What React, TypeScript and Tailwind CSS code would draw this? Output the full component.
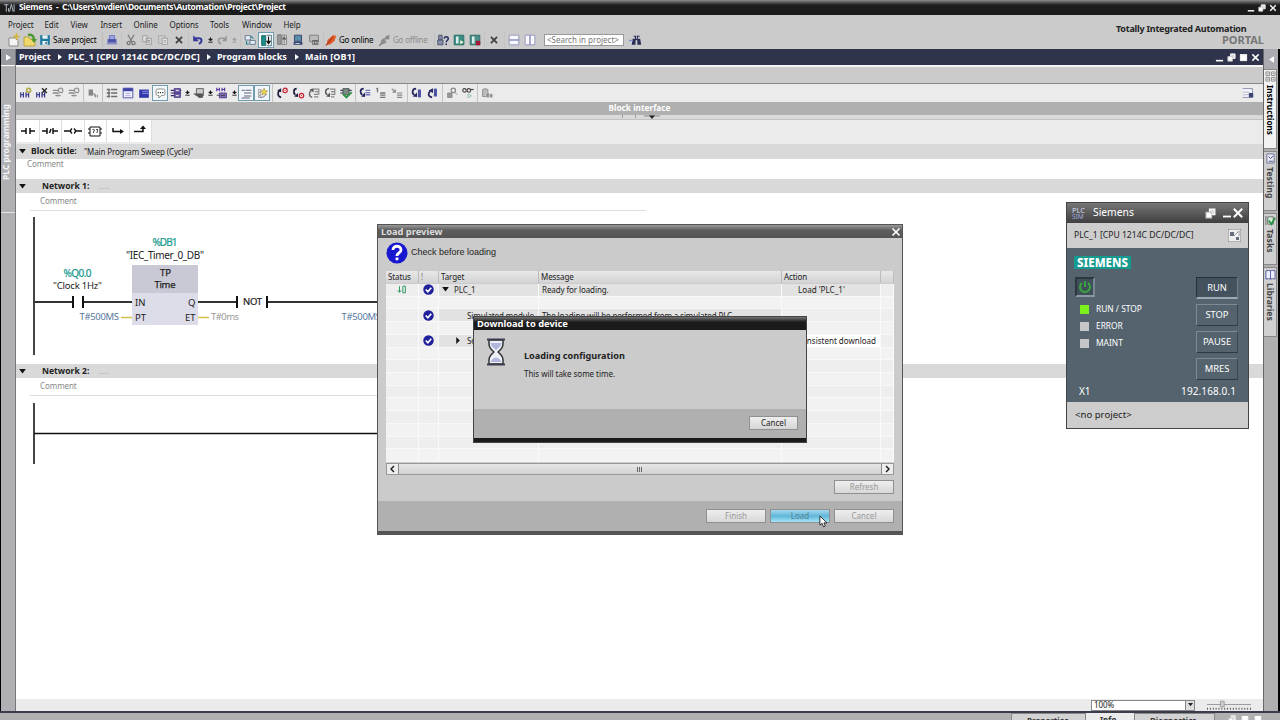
import React from 'react'
import type { ReactNode } from 'react'
import clsx from 'clsx'

const NAVY = '#2b2b86'
const GRAY = '#8b8b8b'

// small toolbar drawings, all on a 16x16 grid
const glyphs: Record<string, ReactNode> = {
  new: <><path d="M3 6h7l2 2v6H3z" fill="#f4f4f4" stroke="#777" strokeWidth=".8" /><path d="M10.500 1v7M7 4.500h7" stroke="#d8b53a" strokeWidth="1.600" /></>,
  open: <><path d="M2 5h5l1 2h5v7H2z" fill="#f0d96a" stroke="#b39a35" strokeWidth=".8" /><path d="M6 3c4-1 6 1 6 5" fill="none" stroke="#4b9a2e" strokeWidth="2.400" /><path d="M9 7h6l-3 4z" fill="#4b9a2e" /></>,
  save: <><path d="M2.500 2.500h11v11h-11z" fill="#1d7b9f" /><path d="M5 2.500h6v4H5zM5 9h6v4.500H5z" fill="#e8f2f5" /><path d="M8.500 10h1.500v2.500H8.500z" fill="#1d5a78" /></>,
  print: <><path d="M5 3h6v5H5z" fill="#9aa2e0" stroke="#6c72c0" /><path d="M3 7h10v4H3z" fill="#4d50a8" /><path d="M2 11h12v2H2z" fill="#8388c6" /></>,
  cut: <path d="M4.500 2l5 8.500M11.500 2l-5 8.500M3.500 12a1.500 1.500 0 103.500-1 1.500 1.500 0 10-3.500 1M9 11a1.500 1.500 0 103.500 1 1.500 1.500 0 10-3.500-1" fill="none" stroke="#777" strokeWidth="1.400" />,
  copy: <><path d="M3 3h5v7H3zM7 6h6v7H7z" fill="#ddd" stroke="#999" /><path d="M8.500 8.500h3M8.500 10.500h3" stroke="#888" /></>,
  paste: <><path d="M3 3h7v9H3z" fill="#ccc" stroke="#aaa" /><path d="M7 6h6v7H7z" fill="#e8e8e8" stroke="#999" /><path d="M8.500 8.500h3M8.500 10.500h3" stroke="#999" /></>,
  del: <path d="M4.500 4.500l7 7M11.500 4.500l-7 7" stroke="#3c3c3c" strokeWidth="1.900" />,
  undo: <><path d="M5 6h4c4 0 4 5 0 6.500" fill="none" stroke="#33379b" strokeWidth="2.200" /><path d="M2.500 2.500v7H9z" fill="#33379b" /></>,
  redo: <><path d="M11 6H7c-4 0-4 5 0 6.500" fill="none" stroke="#999" strokeWidth="1.800" /><path d="M13.500 2.500v7H8z" fill="#999" /></>,
  drop: <><path d="M8 2v6M4 6h8l-4 4zM3 13h10" stroke="#111" strokeWidth="2" fill="#111" /></>,
  dropgray: <><path d="M8 2v6M4 6h8l-4 4zM3 13h10" stroke="#999" strokeWidth="1.800" fill="#999" /></>,
  compile: <><path d="M2.500 3h6v5h-6zM8 8.500h6V13H8z" fill="#e6eef5" stroke="#60738c" /><path d="M9 3.500l3 3M4 9v3.500h3" stroke="#1f8792" fill="none" strokeWidth="1.200" /></>,
  download: <><path d="M2 2h5v12H2z" fill="#1b8f89" stroke="#145d5a" /><path d="M10.500 3v6M8.500 9h4l-2 3z" stroke="#111" fill="#111" strokeWidth="1.400" /><path d="M8 1.500h6v13H8" fill="none" stroke="#3b626b" /></>,
  upload: <><path d="M3 2h4v11H3z" fill="#999" stroke="#777" /><path d="M8 2.500h5v10.500H8z" fill="#e3e3e3" stroke="#777" /><path d="M10.500 12V6M8.500 7l2-3 2 3z" stroke="#666" fill="#666" /></>,
  sim: <><path d="M4 2.500h8v7H4z" fill="#5a8fa8" stroke="#333c66" /><path d="M3 10h10v3.500H3z" fill="#3d4773" /><path d="M5 12h5" stroke="#cdd" /></>,
  runtime: <><path d="M3 2.500h10v7.500H3z" fill="#bbb" stroke="#777" /><path d="M6 8h7v5.500H6z" fill="#666" /><path d="M7.500 10v2M9.500 10v2M11.500 10v2" stroke="#ddd" /></>,
  online: <><path d="M4 8l6-5.500 4 .5-2 6-5 4-4 .5z" fill="#df5b2c" /><path d="M2 14.500L10 5" stroke="#a93b16" strokeWidth="1.200" /></>,
  offline: <><path d="M3 9l3-3 4 4-3 2.500H4zM8 4l5-2v5l-3 .500z" fill="#8d8d8d" /><path d="M1.500 14.500l3-3M7 7l3-1" stroke="#777" strokeWidth="1.500" /></>,
  help: <><path d="M3 2.500h4v5H3zM2 8h6v5.500H2z" fill="#8790a8" stroke="#3f4665" strokeWidth=".9" /><path d="M9.500 6.500c0-3 4.500-3 4.500 0 0 2-2.300 1.600-2.300 4M11.700 12v1.700" fill="none" stroke="#252a63" strokeWidth="1.700" /></>,
  start: <><path d="M2.500 2.500h11v11h-11z" fill="#3a8d85" stroke="#286a64" /><path d="M4.500 4h3v8h-3z" fill="#d9eeea" /><path d="M9 7.500l5 3-5 3z" fill="#fff" stroke="#2c7f46" strokeWidth=".8" /></>,
  stop: <><path d="M2.500 2.500h11v11h-11z" fill="#4a9088" stroke="#286a64" /><path d="M4.500 4h3v8h-3z" fill="#d9eeea" /><path d="M9 9h5v5H9z" fill="#a51736" /></>,
  splith: <><path d="M2.500 2.500h11v11h-11z" fill="#fafaff" stroke="#8d91bd" /><path d="M2.500 8h11" stroke="#7a7fb8" strokeWidth="1.500" /></>,
  splitv: <><path d="M2.500 2.500h11v11h-11z" fill="#fafaff" stroke="#8d91bd" /><path d="M8 2.500v11" stroke="#7a7fb8" strokeWidth="1.500" /></>,
  find: <><path d="M5 6h3v6.500H4zM10 6h3l1 6.500h-4z" fill="#292d58" /><path d="M6 3.500h2V7h2V3.500h2.500" stroke="#292d58" fill="none" strokeWidth="1.200" /><path d="M1 8h4" stroke="#8390d8" strokeWidth="1.500" /></>,
  netadd: <><path d="M2 7v6M2 10h3M5 7v6M8 7v6M8 10h3M11 7v6" stroke={NAVY} strokeWidth="1.300" /><circle cx="11" cy="5" r="3.200" fill="#b3ad4b" /><circle cx="11" cy="5" r="1.200" fill="#eef" /></>,
  netdel: <><path d="M2 7v6M2 10h3M5 7v6M8 7v6M8 10h3M11 7v6" stroke={NAVY} strokeWidth="1.300" /><path d="M8 2.500l5.500 5.500M13.500 2.500L8 8" stroke="#222" strokeWidth="1.500" /></>,
  rowadd: <><path d="M2 5h6M2 8h6M5 11h6" stroke={GRAY} strokeWidth="1.600" /><circle cx="11" cy="5" r="2.500" fill="none" stroke="#999" strokeWidth="1.500" /><path d="M8 8v4" stroke="#999" /></>,
  lock: <><path d="M3 4h5v7H3z" fill="#858585" /><path d="M8 9h2v3M11 10v3M13 10v3" stroke="#777" fill="none" /></>,
  rows: <path d="M2 4h4M7 4h7M2 8h4M7 8h7M2 12h4M7 12h7M4.500 3v10" stroke="#6c6c6c" strokeWidth="1.500" />,
  panel: <><path d="M2.500 2.500h11v11h-11z" fill="#f5f5ff" stroke="#3e43a5" /><path d="M2.500 2.500h11v3.500h-11z" fill="#3e43a5" /><path d="M5 8.500h6M5 11h6" stroke="#9da0cf" /></>,
  panelfill: <><path d="M2.500 4h11v9.500h-11z" fill="#3238ab" /><path d="M6 6h7M6 8.500h7" stroke="#98a0ed" /></>,
  note: <><path d="M2.500 4.500q0-2 2-2h7q2 0 2 2v4q0 2-2 2H9l-3 3v-3H4.500q-2 0-2-2z" fill="#fff" stroke="#777" /><path d="M4.500 7h1.500M7.200 7h1.500M10 7h1.500" stroke="#333" strokeWidth="1.600" /></>,
  symbol: <><path d="M6 3h7v10H6z" fill="#7666ac" stroke="#48347e" /><path d="M2 5h4M2 8h11M2 11h4M13 5h1" stroke="#3b2671" strokeWidth="1.300" /><path d="M8 5h3M8 11h3" stroke="#fff" /></>,
  blockgray: <><path d="M5 3h8v8H5z" fill="#ccc" stroke="#555" /><path d="M2 9h6v4M8 9h4v4H8z" fill="#555" stroke="#555" /></>,
  contact: <><path d="M2 2v4M2 4h3M5 2v4M8 2v4M8 4h3M11 2v4" stroke="#56369c" strokeWidth="1.300" /><path d="M5 8h8v5.500H5z" fill="#8671b9" stroke="#4c3682" /><path d="M2 10.500h3M6.500 11h5" stroke="#333" /></>,
  listbox: <path d="M2 4h4M7 4h7M5 7.500h9M5 11h9M2 13.500h10" stroke="#5d637c" strokeWidth="1.300" />,
  star: <><path d="M3 3h3v3H3zM3 7h3v3H3zM3 11h3v2H3z" fill="#fff" stroke="#777" strokeWidth=".8" /><path d="M10 1.500l1.300 3 3 .3-2.300 2 .7 3.200L10 8.300 7.500 10l.6-3.200-2-2 2.700-.3z" fill="#f0da4b" stroke="#967f25" strokeWidth=".7" /><path d="M6 13l4-1 2-3" stroke="#55668a" fill="none" /></>,
  upred: <><path d="M7 13C3 12.500 2.500 8 5 5" fill="none" stroke="#202040" strokeWidth="2" /><path d="M2.500 5L7 2.500v4.500z" fill="#202040" /><circle cx="11.500" cy="5" r="2.500" fill="#fff" stroke="#c32032" strokeWidth="1.300" /><path d="M10.500 4l2 2M12.500 4l-2 2" stroke="#c32032" strokeWidth=".8" /></>,
  downred: <><path d="M6.500 3C2.500 3 2.500 8 5 10" fill="none" stroke="#202040" strokeWidth="2" /><path d="M3.500 12l4.500.5V8z" fill="#202040" /><circle cx="12" cy="11" r="2.500" fill="#fff" stroke="#c32032" strokeWidth="1.300" /><path d="M11 10l2 2M13 10l-2 2" stroke="#c32032" strokeWidth=".8" /></>,
  uplist: <><path d="M6 13C2 12 2 7 5 5" fill="none" stroke="#666" strokeWidth="1.700" /><path d="M3 4L7.500 2.500v5z" fill="#555" /><path d="M8 3.500h6M9 6.500h5M8 9.500h5M8 12.500h5M13.500 3v7" stroke="#888" strokeWidth="1.300" /></>,
  downlist: <><path d="M7 3C2 3 2 8 5 10" fill="none" stroke="#555" strokeWidth="1.700" /><path d="M3.500 12L8 12.500V7.500z" fill="#555" /><path d="M8 3.500h6M9 6.500h5M9 9.500h5M9 12.500h4M13.500 3v7" stroke="#888" strokeWidth="1.300" /></>,
  check: <><path d="M4.500 3h7v7h-7z" fill="#7c8a84" stroke="#405048" /><path d="M1.500 5h3M1.500 8h3M11 5h3.500" stroke="#445" strokeWidth="1.300" /><path d="M5 9.500L8.500 13l6-6" fill="none" stroke="#329146" strokeWidth="2.400" /></>,
  jump: <><path d="M6.500 3C2 3 2 8 5 10" fill="none" stroke="#25275f" strokeWidth="2" /><path d="M3.500 12l4.500.5v-5z" fill="#25275f" /><path d="M8.500 5H14M8.500 7.500H14M8.500 10H14" stroke="#7276b8" strokeWidth="1.500" /></>,
  indent: <path d="M4 2v5M2.500 3H4M7 8h6M7 10.500h6M7 13h6" stroke="#777" strokeWidth="1.500" />,
  outdent: <path d="M2 3l4 4M6 4v3H3M8 8h6M8 10.500h6M8 13h6" stroke="#888" strokeWidth="1.400" fill="none" />,
  next: <><path d="M7 3C2 3 2 9 5 10" fill="none" stroke="#25275f" strokeWidth="2" /><path d="M3 12l5 .5v-5z" fill="#25275f" /><path d="M9 4h3.500v9H9z" fill="#4a50a4" /></>,
  prev: <><path d="M7 13C2 12 2 8 5 6" fill="none" stroke="#25275f" strokeWidth="2" /><path d="M3 5l5-2.500V8z" fill="#25275f" /><path d="M9 3h3.500v9H9z" fill="#4a50a4" /></>,
  person: <><circle cx="9.500" cy="5" r="2.500" fill="none" stroke="#888" strokeWidth="1.400" /><path d="M3 8h5v5H3zM11 7l3 3" fill="#999" stroke="#888" /></>,
  glasses: <><circle cx="4" cy="5" r="2" fill="none" stroke="#444" strokeWidth="1.300" /><circle cx="9" cy="5" r="2" fill="none" stroke="#444" strokeWidth="1.300" /><path d="M11 4h3.500" stroke="#444" strokeWidth="1.300" /><path d="M8 9l4 2.200L8 13.500z" fill="#e5f4ea" stroke="#7daf93" strokeWidth=".8" /></>,
  db: <><path d="M3 4q3-2 6 0v8H3z" fill="#bbb" stroke="#888" /><path d="M7 8h3.500v5H7zM11 9h3.500v4H11z" fill="#888" stroke="#ddd" strokeWidth=".6" /></>,
  layout: <><path d="M2 3h11v10H2" fill="#f8f8fc" stroke="#7a80a8" /><path d="M2 7h8M2 10h8" stroke="#aab" /><path d="M9 8h5v5H9z" fill="#3b4474" /></>,
}

type ToolItem = [kind: string, className?: string]

const fileTools: ToolItem[] = [
  ['print'], ['|'], ['cut', 'w-4'], ['copy'], ['paste'], ['del'], ['|'], ['undo'], ['drop', 'w-2'], ['redo'], ['dropgray', 'w-2'], ['|', 'w-1'],
  ['compile'], ['download', 'framed'], ['upload'], ['sim'], ['runtime'], ['|', 'w-0.5'],
]

const editorTools: ToolItem[] = [
  ['netadd'], ['netdel'], ['rowadd'], ['rowadd'], ['|'], ['lock'], ['|'],
  ['rows'], ['panel'], ['panelfill'], ['note', 'framed'], ['symbol'], ['drop', 'w-[7px]'], ['blockgray'], ['drop', 'w-[7px]'], ['contact'], ['drop', 'w-2'],
  ['listbox', 'framed'], ['star', 'framed'], ['|', 'w-1'],
  ['upred'], ['downred'], ['uplist'], ['downlist'], ['check'], ['|'],
  ['jump'], ['indent'], ['outdent'], ['|', 'w-1'], ['next'], ['prev'], ['|'], ['person'], ['glasses'], ['|'], ['db'],
]

function Glyph({ name, className }: { name: string; className?: string }) {
  return <svg viewBox="0 0 16 16" className={clsx('block shrink-0', className ?? 'h-[14px] w-[14px]')}>{glyphs[name]}</svg>
}

function Tools({ items }: { items: ToolItem[] }) {
  return (
    <div className="flex h-full items-center">
      {items.map(([kind, cls], i) =>
        kind === '|' ? (
          <div key={i} className={clsx('flex h-full shrink-0 justify-center', cls ?? 'w-[3px]')}><div className="h-full w-px bg-[#c3c3c3]" /></div>
        ) : (
          <div key={i} className={clsx('flex h-4 shrink-0 items-center justify-center', cls === 'framed' ? 'w-4 border border-[#6f9cae] bg-[#f3f7fb]' : cls ?? 'w-4')}>
            <Glyph name={kind} className={kind.startsWith('drop') ? 'h-[8px] w-[7px]' : cls === 'framed' ? 'h-[13px] w-[13px]' : undefined} />
          </div>
        ),
      )}
    </div>
  )
}

function WinIcon({ kind, className }: { kind: 'min' | 'restore' | 'max' | 'close'; className?: string }) {
  return (
    <svg viewBox="0 0 10 10" className={clsx('block shrink-0', className ?? 'h-[10px] w-[10px]')} fill="none" stroke="#fff">
      {kind === 'min' && <path d="M1 8.500h8" strokeWidth="1.800" />}
      {kind === 'restore' && <><path d="M4 1h5v5H4z" fill="#ddd" /><path d="M1 4h5v5H1z" fill="#fff" stroke="#ccc" /></>}
      {kind === 'max' && <><path d="M1.500 2.500h7v6h-7z" fill="#fff" /><path d="M1 2h8" strokeWidth="1.500" /></>}
      {kind === 'close' && <path d="M1.500 1.500l7 7M8.500 1.500l-7 7" strokeWidth="1.700" />}
    </svg>
  )
}

function TitleBar() {
  return (
    <div className="flex h-[15px] shrink-0 items-center bg-gradient-to-b from-[#8c8c8c] via-[#1d1d1d] via-35% to-[#1a1a1a] text-white">
      <svg viewBox="0 0 12 10" className="ml-1 h-[10px] w-[11px]" stroke="#bcc4d4" fill="none"><path d="M0 1.500h5M2.500 1v8M6 9l2-8 2 8M5 5v4M11 1v8" /></svg>
      <div className="ml-[4px] text-[8.500px] font-bold tracking-[-0.330px] whitespace-pre">Siemens  -  C:\Users\nvdien\Documents\Automation\Project\Project</div>
      <div className="mr-[3px] ml-auto flex items-center gap-[3px]">
        <WinIcon kind="min" className="h-2 w-2" /><WinIcon kind="restore" className="h-2 w-2" /><WinIcon kind="close" className="h-2 w-2" />
      </div>
    </div>
  )
}

const menus = [['Project', 'w-[36.500px]'], ['Edit', 'w-[26px]'], ['View', 'w-[30px]'], ['Insert', 'w-[33px]'], ['Online', 'w-[36px]'], ['Options', 'w-[40.500px]'], ['Tools', 'w-[32px]'], ['Window', 'w-[41.500px]'], ['Help', 'w-6']]

function Header() {
  return (
    <div className="flex h-[34px] shrink-0 justify-between bg-[#cbcbcb] text-[8px] text-[#222]">
      <div className="flex flex-col">
        <div className="flex h-[17px] items-center pt-[3px] pl-2 tracking-[-0.100px]">
          {menus.map(([label, w]) => <div key={label} className={clsx('shrink-0', w)}>{label}</div>)}
        </div>
        <div className="flex h-[16px] items-center pl-1.5 tracking-[-0.200px] whitespace-nowrap">
          <Glyph name="new" className="h-4 w-4" /><Glyph name="open" className="h-4 w-4" /><Glyph name="save" className="h-[14px] w-[14px]" />
          <div className="w-[50px] pl-px text-black">Save project</div>
          <div className="h-full w-[2px] border-l border-[#bbb]" />
          <Tools items={fileTools} />
          <div className="flex items-center">
            <Glyph name="online" className="h-[14px] w-[14px]" />
            <div className="ml-px w-[39px] text-black">Go online</div>
            <Glyph name="offline" className="h-[14px] w-[14px]" />
            <div className="ml-px w-[41px] text-[#8c8c8c]">Go offline</div>
          </div>
          <Tools items={[['|', 'w-px'], ['help'], ['start'], ['stop'], ['|', 'w-[3px]'], ['del'], ['|', 'w-1'], ['splith'], ['splitv']]} />
          <div className="ml-[6px] flex h-[12px] w-[80px] shrink-0 items-center border border-[#999] bg-white pl-[2px] tracking-normal text-[#777]">&lt;Search in project&gt;</div>
          <Glyph name="find" className="ml-[4px] h-[15px] w-[15px]" />
        </div>
      </div>
      <div className="w-[180px] pt-[9px] font-bold">
        <div className="pl-[16px] text-[9px] leading-[10px] tracking-[-0.230px] whitespace-nowrap text-[#222]">Totally Integrated Automation</div>
        <div className="pr-4 text-right text-[11px] leading-[11px] text-[#777]">PORTAL</div>
      </div>
    </div>
  )
}

function LeftRail() {
  return (
    <div className="flex w-4 shrink-0 flex-col items-center border-r border-l border-r-[#77777c] border-l-black bg-[#b0b0b4]">
      <div className="flex h-[17px] w-full items-center justify-center border-b border-white bg-[#9999a0]"><svg viewBox="0 0 6 8" className="h-[7px] w-[5px]"><path d="M0 0l6 4-6 4z" fill="#fff" /></svg></div>
      <div className="flex h-[147px] w-full flex-col items-start justify-end border-b border-[#e5e5e5] pb-[32px]">
        <div className="rotate-180 text-[8.500px] font-bold leading-[10px] whitespace-nowrap text-[#f5f5f5] [writing-mode:vertical-rl]">PLC programming</div>
      </div>
    </div>
  )
}

const sideTabs: { label: string; h: string; icon: ReactNode; active?: boolean }[] = [
  { label: 'Instructions', h: 'h-[80px]', active: true, icon: <path d="M1 1h4v4H1zM7 1h4v4H7zM1 7h4v4H1zM7 7h4v4H7zM2 3h2M8 3h2M2 9h2M8 9h2" fill="none" stroke="#888" /> },
  { label: 'Testing', h: 'h-[60px]', icon: <><path d="M2 1h8v10H2z" fill="#e7e9f3" stroke="#6a6e96" /><path d="M4 4l2 2 3-3M4 9h5" fill="none" stroke="#434b83" /></> },
  { label: 'Tasks', h: 'h-[52px]', icon: <><path d="M1 1v10M3 2h6v8H3z" fill="#d5ecda" stroke="#666" /><path d="M4 6l3 4 4-7" fill="none" stroke="#269348" strokeWidth="2" /></> },
  { label: 'Libraries', h: 'h-[70px]', icon: <path d="M1 2q3-1 5 0 2-1 5 0v9q-3-1-5 0-2-1-5 0zM6 2v9" fill="#eef" stroke="#4c559a" /> },
]

function RightRail() {
  return (
    <div className="flex w-[17px] shrink-0 flex-col border-r-2 border-l border-r-black border-l-[#66666b] bg-[#b0b0b0]">
      <div className="flex h-5 items-center justify-center bg-[#aaaab0]"><svg viewBox="0 0 6 8" className="h-[7px] w-[5px]"><path d="M6 0L0 4l6 4z" fill="#fff" /></svg></div>
      {sideTabs.map((t) => (
        <div key={t.label} className={clsx('mb-[2px] flex w-[13px] flex-col items-center border border-l-0 border-[#888] pt-px', t.h, t.active ? 'bg-[#f2f2f2]' : 'bg-[#d0d0d0]')}>
          <svg viewBox="0 0 12 12" className="h-[11px] w-[11px] shrink-0">{t.icon}</svg>
          <div className={clsx('mt-[3px] leading-[12px] font-bold whitespace-nowrap [writing-mode:vertical-rl]', t.active ? 'text-[8.200px] text-black' : 'text-[8.700px] text-[#444]')}>{t.label}</div>
        </div>
      ))}
    </div>
  )
}

function Breadcrumb() {
  const arrow = <svg viewBox="0 0 4 6" className="h-[6px] w-[4px]"><path d="M0 0l4 3-4 3z" fill="#fff" /></svg>
  return (
    <div className="flex h-4 shrink-0 items-center bg-[#2f334c] pl-[3px] text-[9px] font-bold whitespace-nowrap text-white">
      <div className="w-[39px]">Project</div>{arrow}
      <div className="ml-[6px] w-[139px] tracking-[0.180px]">PLC_1 [CPU 1214C DC/DC/DC]</div>{arrow}
      <div className="ml-[6px] w-[78px]">Program blocks</div>{arrow}
      <div className="ml-[6px] tracking-[0.100px]">Main [OB1]</div>
      <div className="mr-[3px] ml-auto flex items-center gap-[3px]">
        <WinIcon kind="min" className="h-[9px] w-[9px]" /><WinIcon kind="restore" className="h-[9px] w-[9px]" /><WinIcon kind="max" className="h-[9px] w-[9px]" /><WinIcon kind="close" className="h-[9px] w-[9px]" />
      </div>
    </div>
  )
}

const favorites = [
  <path d="M1 6h5M6 3v6M10 3v6M10 6h5" />,
  <path d="M0 6h5M5 3v6M11 3v6M11 6h5M7.500 8l1.500-4" />,
  <path d="M-1 6h6M11 6h6M7 3.500q-3 2.500 0 5M9 3.500q3 2.500 0 5" />,
  <><path d="M3 2h10v9H3zM1 4h2M1 8h2M13 4h2M13 8h2" strokeWidth="1" /><path d="M5.500 5q1-2 2 0l-1 2v1M9 5q1-2 2 0l-1 2v1" strokeWidth=".8" /></>,
  <><path d="M3 3v3.500h8" /><path d="M10 4l4 2.500L10 9z" fill="#111" stroke="none" /></>,
  <><path d="M2 6.500h9V3" /><path d="M8 4l3-3.500L14 4z" fill="#111" stroke="none" /></>,
]

function Triangle() {
  return <svg viewBox="0 0 8 6" className="h-[5px] w-[7px] shrink-0"><path d="M0 0h8L4 5.500z" fill="#111" /></svg>
}

function NetworkHead({ title }: { title: string }) {
  return (
    <>
      <div className="flex h-[14px] shrink-0 items-center bg-[#d9d9d9] pl-[3px] text-[8.600px] leading-[12px] font-bold text-[#222]">
        <Triangle /><div className="ml-[16px] w-[56px]">{title}</div><div className="text-[8px] font-normal text-[#aaa]">.....</div>
      </div>
      <div className="ml-[14px] h-[18px] w-[616px] shrink-0 border-b border-[#ddd] pt-[2px] pl-[10px] text-[8px] leading-[11px] tracking-[-0.080px] text-[#888]">Comment</div>
    </>
  )
}

function LadderOne() {
  return (
    <svg viewBox="16 211 1247 153" className="h-[153px] w-full shrink-0" fontSize="10" fill="#222">
      <path d="M34 217v138" stroke="#444" strokeWidth="2" />
      <path d="M34 302h39M83 302h49M198 302h39M267 302h120" stroke="#333" strokeWidth="2" />
      <path d="M73 296v12M83 296v12M237 296v12M267 296v12" stroke="#111" strokeWidth="2" />
      <path d="M132 265h66v60h-66z" fill="#dcdde9" />
      <path d="M132 265h66v28h-66z" fill="#c9c9d6" />
      <path d="M121 317.500h11M198 317.500h11" stroke="#d3c04a" strokeWidth="1.500" />
      <g textAnchor="middle">
        <text x="77.500" y="277" fill="#12988a" stroke="#12988a" strokeWidth=".2" textLength="28">%Q0.0</text>
        <text x="77.500" y="289" fontSize="9.500" textLength="49">"Clock 1Hz"</text>
        <text x="165" y="246" fill="#12988a" stroke="#12988a" strokeWidth=".2" textLength="25">%DB1</text>
        <text x="165" y="258.500" textLength="78">"IEC_Timer_0_DB"</text>
        <text x="165.500" y="275.500" fontSize="9.500" stroke="#222" strokeWidth=".25">TP</text>
        <text x="165" y="288" fontSize="9.500" stroke="#222" strokeWidth=".25" textLength="21">Time</text>
        <text x="252.500" y="305" fontSize="9.500" stroke="#222" strokeWidth=".2" textLength="19">NOT</text>
      </g>
      <g fontSize="9.500">
        <text x="135" y="306">IN</text>
        <text x="135" y="321">PT</text>
        <text x="188" y="306">Q</text>
        <text x="185" y="321">ET</text>
        <text x="79.500" y="320" fill="#5778a0" textLength="39.500">T#500MS</text>
        <text x="211" y="320" fill="#999" textLength="28">T#0ms</text>
        <text x="341.500" y="320" fill="#5778a0" textLength="39.500">T#500MS</text>
      </g>
    </svg>
  )
}

function Editor() {
  return (
    <div className="flex min-w-0 flex-1 flex-col bg-white">
      <Breadcrumb />
      <div className="h-[18px] shrink-0 border-t-2 border-[#f4f4f4] bg-[#cbcbcb]" />
      <div className="flex h-[19px] shrink-0 items-center justify-between border-t border-[#888] bg-[#ebebeb] pr-2 pl-[2px]">
        <Tools items={editorTools} />
        <Glyph name="layout" className="h-[14px] w-[14px]" />
      </div>
      <div className="h-[13px] shrink-0 bg-[#b0b0b0] text-center text-[8.250px] leading-[12px] font-bold text-white">Block interface</div>
      <div className="flex h-[5px] shrink-0 justify-center gap-[8px] border-b border-[#c2c2c2] bg-[#dadada] pl-[2px]">
        <div className="h-[3px] w-[14px] border-r border-l border-[#999]" />
        <svg viewBox="0 0 16 4" className="h-[4px] w-[16px]"><path d="M0 1h16" stroke="#888" /><path d="M5 .5h6L8 4z" fill="#222" /></svg>
      </div>
      <div className="flex h-6 shrink-0 bg-[#ebebeb] pb-[2px] pl-px">
        {favorites.map((f, i) => (
          <div key={i} className="flex w-[22.500px] items-center justify-center border-r border-[#ddd] bg-white">
            <svg viewBox="0 0 16 12" className="h-[12px] w-[16px] overflow-visible" fill="none" stroke="#111" strokeWidth="1.500">{f}</svg>
          </div>
        ))}
      </div>
      <div className="flex h-[15px] shrink-0 items-center bg-[#d9d9d9] pl-[3px] text-[8.600px] text-[#222]">
        <Triangle /><div className="ml-[5px] w-[53px] font-bold whitespace-nowrap">Block title:</div><div className="text-[8px] tracking-[-0.150px]">"Main Program Sweep (Cycle)"</div>
      </div>
      <div className="h-[20px] shrink-0 pl-[11px] text-[8px] leading-[10px] tracking-[-0.080px] text-[#888]">Comment</div>
      <NetworkHead title="Network 1:" />
      <LadderOne />
      <NetworkHead title="Network 2:" />
      <svg viewBox="16 396 1247 80" className="h-[80px] w-full shrink-0">
        <path d="M34 403v61" stroke="#444" strokeWidth="2" />
        <path d="M34 433.500h343" stroke="#111" strokeWidth="1.500" />
      </svg>
      <div className="mt-auto flex h-[12px] shrink-0 items-center justify-end bg-[#ebebeb] pr-[12px]">
        <div className="flex h-[11px] w-[104px] items-center justify-between border border-[#888] bg-white pl-[2px] text-[8px] tracking-[-0.100px] text-[#222]">
          100%<div className="flex h-full w-[9px] items-center justify-center border-l border-[#888] bg-[#ddd]"><svg viewBox="0 0 6 4" className="w-[5px]"><path d="M0 0h6L3 4z" fill="#222" /></svg></div>
        </div>
        <svg viewBox="0 0 46 10" className="ml-[12px] h-[10px] w-[44px]"><path d="M0 4.500h46" stroke="#999" /><path d="M0 9h46" stroke="#555" strokeWidth="2" strokeDasharray="1 2" /><path d="M14 1h4v6h-4z" fill="#ccc" stroke="#888" strokeWidth=".7" /></svg>
      </div>
    </div>
  )
}

function BottomTabs() {
  return (
    <div className="flex h-[9px] shrink-0 items-start overflow-hidden border-t-2 border-[#3a3d47] bg-[#b0b0b0] pl-[1011px] text-[8px] leading-[14px] font-bold text-[#333]">
      <div className="h-5 w-[75px] border border-[#888] bg-[#d3d3d3] pl-[15px]">Properties</div>
      <div className="h-5 w-[48px] bg-[#ebebeb] pl-[14px]">Info</div>
      <div className="h-5 w-[81px] border border-[#888] bg-[#d3d3d3] pl-[15px]">Diagnostics</div>
      <div className="mt-[2px] ml-[13px] flex gap-[5px]"><WinIcon kind="restore" className="h-2 w-2" /><WinIcon kind="max" className="h-2 w-2" /><WinIcon kind="max" className="h-2 w-2" /></div>
    </div>
  )
}

function Button({ children, className }: { children: ReactNode; className?: string }) {
  return <div className={clsx('flex h-[14px] items-center justify-center border border-[#909090] text-[8px] tracking-normal', className ?? 'w-[60px] bg-gradient-to-b from-[#eee] to-[#d8d8d8] text-[#999]')}>{children}</div>
}

function Checked() {
  return <svg viewBox="0 0 12 12" className="h-[11px] w-[11px]"><circle cx="6" cy="6" r="5.700" fill="#20209a" /><path d="M3 6l2.300 2.500L9 4" fill="none" stroke="#fff" strokeWidth="1.800" /></svg>
}

type LoadRow = { target: ReactNode; message?: string; action?: string; synced?: boolean; active?: boolean }

const loadRows: (LoadRow | null)[] = [
  { synced: true, target: <><Triangle /><span className="ml-[5px]">PLC_1</span></>, message: 'Ready for loading.', action: "Load 'PLC_1'" },
  null,
  { target: <span className="ml-[25px]">Simulated module</span>, message: 'The loading will be performed from a simulated PLC.' },
  null,
  { target: <><svg viewBox="0 0 4 8" className="ml-[14px] h-[7px] w-[4px]"><path d="M0 0l4 4-4 4z" fill="#111" /></svg><span className="ml-[7px]">Software</span></>, action: 'Consistent download', active: true },
  null, null, null, null, null, null, null, null, null,
]

const cols = 'grid grid-cols-[33px_20px_100px_243px_99px_13px]'

function LoadPreview() {
  return (
    <div className="absolute top-[224px] left-[377px] flex h-[311px] w-[526px] flex-col border border-[#555] bg-[#cbcbcb] text-[8px] tracking-[-0.100px] text-[#222]">
      <div className="flex h-[13px] shrink-0 items-center justify-between bg-gradient-to-b from-[#9a9a9a] via-[#5e5e5e] via-40% to-[#555] pr-px pl-[3px] text-[9.300px] leading-[12px] font-bold tracking-normal text-[#ddd]">
        Load preview<WinIcon kind="close" />
      </div>
      <div className="flex h-[33px] shrink-0 items-center pb-[4px] pl-[8px]">
        <svg viewBox="0 0 22 22" className="h-[22px] w-[22px]"><circle cx="11" cy="11" r="10.500" fill="#1717cf" /><path d="M7 8c0-5 8-5 8 0 0 3-4 2.500-4 6M11 15.500v2.800" fill="none" stroke="#fff" strokeWidth="2.800" /></svg>
        <div className="ml-[3px] font-['Liberation_Sans',sans-serif] text-[9px] tracking-normal">Check before loading</div>
      </div>
      <div className="ml-[8px] flex h-[191px] w-[508px] shrink-0 flex-col bg-[#f2f2f2]">
        <div className={clsx(cols, 'h-[13px] shrink-0 border-b border-[#ccc] bg-gradient-to-b from-[#e8e8e8] to-[#d3d3d6] leading-[12px] *:border-r *:border-[#bbb] *:pl-[2px]')}>
          <div>Status</div><div className="text-[#777]">!</div><div>Target</div><div>Message</div><div>Action</div><div />
        </div>
        {loadRows.map((row, i) => (
          <div key={i} className={clsx(cols, 'min-h-0 flex-1 border-b border-[#f8f8f8] leading-[11px] whitespace-nowrap *:flex *:items-center *:border-r *:border-[#fafafa]', i % 2 ? 'bg-[#f2f2f2]' : 'bg-[#eeeeef]')}>
            <div className="justify-center">{row?.synced && <svg viewBox="0 0 12 10" className="h-[9px] w-[10px]" fill="none" stroke="#2f9b63"><path d="M3 1v7M1 6l2 2.500L5 6M7 1h3v8H7z" strokeWidth="1.200" /></svg>}</div>
            <div className="justify-center">{row && <Checked />}</div>
            <div className={clsx('pl-[3px]', row && 'bg-[#e2e2e2]')}>{row?.target}</div>
            <div className={clsx('pl-[3px]', row && 'bg-[#e2e2e2]')}>{row?.message}</div>
            <div className={clsx('tracking-normal', row?.active ? 'justify-end bg-white pr-[4px]' : 'pl-[16px] text-[8.100px]', row?.action && !row.active && 'bg-[#e2e2e2]')}>{row?.action}</div>
            <div />
          </div>
        ))}
      </div>
      <div className="mt-px ml-[8px] flex h-[12px] w-[508px] shrink-0 border border-[#999] bg-gradient-to-b from-[#e6e6e6] to-[#d2d2d4]">
        <div className="flex w-[12px] items-center justify-center border-r border-[#888] bg-[#eee]"><svg viewBox="0 0 5 8" className="h-[8px]"><path d="M4 1L1 4l3 3" fill="none" stroke="#222" strokeWidth="1.500" /></svg></div>
        <div className="flex flex-1 items-center justify-center gap-px pr-[2px]"><i className="h-[5px] w-px bg-[#666]" /><i className="h-[5px] w-px bg-[#666]" /><i className="h-[5px] w-px bg-[#666]" /></div>
        <div className="flex w-[12px] items-center justify-center border-l border-[#888] bg-[#eee]"><svg viewBox="0 0 5 8" className="h-[8px]"><path d="M1 1l3 3-3 3" fill="none" stroke="#222" strokeWidth="1.500" /></svg></div>
      </div>
      <div className="flex h-[26px] shrink-0 justify-end pt-[5px] pr-[8px]"><Button>Refresh</Button></div>
      <div className="flex flex-1 items-center justify-end gap-1 border-b-[3px] border-[#555] bg-[#b0b0b0] pr-[8px]">
        <Button>Finish</Button>
        <Button className="w-[60px] bg-gradient-to-b from-[#a5d9ee] via-[#5fb6d8] to-[#a4e4f8] text-[#56849a]">Load</Button>
        <Button>Cancel</Button>
      </div>
    </div>
  )
}

function DownloadDialog() {
  return (
    <div className="absolute top-[316px] left-[473px] flex h-[127px] w-[334px] flex-col border border-[#444] bg-[#cbcbcb] text-[#222]">
      <div className="h-[13px] shrink-0 bg-gradient-to-b from-[#777] via-[#1c1c1c] via-40% to-[#1a1a1a] pl-[3px] text-[9.300px] leading-[13px] font-bold text-white">Download to device</div>
      <div className="flex h-[79px] shrink-0 pt-[8px] pl-[12px]">
        <svg viewBox="0 0 20 28" className="h-[28px] w-[20px]" strokeLinejoin="round">
          <path d="M3 2h14v4q0 4-5 8 5 4 5 8v4H3v-4q0-4 5-8-5-4-5-8z" fill="#eef0f8" stroke="#333" strokeWidth="1.500" />
          <path d="M4.500 5h11q0 3-5.500 7-5.500-4-5.500-7zM5 24q0-3 5-4.500 5 1.500 5 4.500z" fill="#b0b7da" />
          <path d="M1 1.500h18M1 26.500h18" stroke="#3c3e50" strokeWidth="2" />
        </svg>
        <div className="pt-[11px] pl-[18px]">
          <div className="text-[9.150px] leading-[13px] font-bold">Loading configuration</div>
          <div className="mt-[6px] text-[8px] leading-[12px] tracking-[-0.040px]">This will take some time.</div>
        </div>
      </div>
      <div className="flex flex-1 justify-end border-b-4 border-[#1a1a1a] bg-[#b0b0b0] pt-[7px] pr-[8px]">
        <Button className="w-[49px] bg-gradient-to-b from-[#eee] to-[#d6d6d6] text-[#222]">Cancel</Button>
      </div>
    </div>
  )
}

const leds = [['RUN / STOP', 'bg-[#7cf01c]'], ['ERROR', 'bg-[#c6c6c8]'], ['MAINT', 'bg-[#c6c6c8]']]

function PlcSim() {
  return (
    <div className="absolute top-[202px] left-[1066px] flex h-[227px] w-[183px] flex-col border border-[#444] bg-[#cdcdcd] text-[#222]">
      <div className="flex h-[20px] shrink-0 items-center bg-gradient-to-b from-[#777] to-[#3f3f41] pr-[4px] pl-[5px] text-[10.300px] text-white">
        <div className="w-[21px] text-[7.500px] leading-[7px] text-[#d5daf2]"><div>PLC</div><div className="text-[6.500px] leading-[6px] text-[#9fa8de]">SIM</div></div>
        <span>Siemens</span>
        <div className="ml-auto flex items-center">
          <WinIcon kind="restore" className="h-[11px] w-[11px]" />
          <WinIcon kind="min" className="ml-[6px] h-[10px] w-[10px]" />
          <WinIcon kind="close" className="h-[12px] w-[12px]" />
        </div>
      </div>
      <div className="flex h-[25px] shrink-0 items-center justify-between pr-[7px] pl-[7px] text-[8.600px]">
        PLC_1 [CPU 1214C DC/DC/DC]
        <svg viewBox="0 0 13 13" className="h-[13px] w-[13px]"><path d="M0 0h13v13H0z" fill="#eee" stroke="#777" /><path d="M2 3h4v4H2zM8 8h3v3H8z" fill="#666d7d" /><path d="M6 7l5-5v5" fill="#fff" stroke="#999" /></svg>
      </div>
      <div className="flex h-[154px] shrink-0 flex-col bg-[#54636e] text-white">
        <div className="mt-[8px] ml-[7px] flex h-[13px] w-[57px] items-center justify-center bg-[#159a90] text-[11.500px] leading-[13px] font-extrabold">SIEMENS</div>
        <div className="mt-[8px] flex justify-between pr-[10px] pl-[8px]">
          <div>
            <div className="flex h-[20px] w-[20px] items-center justify-center border-2 border-t-[#2b373d] border-r-[#798892] border-b-[#8b99a2] border-l-[#2b373d] bg-[#405058]">
              <svg viewBox="0 0 14 14" className="h-[14px] w-[14px]"><path d="M4 3a5 5 0 106 0M7 1v6" fill="none" stroke="#39a83f" strokeWidth="1.900" /></svg>
            </div>
            <div className="mt-[6px] ml-[5px] flex flex-col gap-[5px]">
              {leds.map(([label, color]) => (
                <div key={label} className="flex h-[12px] items-center text-[8.400px]"><div className={clsx('mr-[7px] h-[9px] w-[9px]', color)} />{label}</div>
              ))}
            </div>
          </div>
          <div className="flex flex-col gap-[5px]">
            {['RUN', 'STOP', 'PAUSE', 'MRES'].map((b, i) => (
              <div key={b} className={clsx('flex h-[22px] w-[42px] items-center justify-center border text-[9.300px]', i === 0 ? 'border-t-[#26323a] border-r-[#718089] border-b-[#9aa9b2] border-l-[#26323a] border-b-2 bg-[#43525c]' : 'border-t-[#7d8b94] border-r-[#394750] border-b-[#2e3a42] border-l-[#7d8b94] bg-[#54636e]')}>{b}</div>
            ))}
          </div>
        </div>
        <div className="mt-auto mb-[4px] flex justify-between pr-[12px] pl-[12px] text-[10px] leading-[13px]"><span>X1</span><span className="tracking-[0.100px]">192.168.0.1</span></div>
      </div>
      <div className="flex flex-1 items-center pl-[8px] text-[9.600px]">&lt;no project&gt;</div>
    </div>
  )
}

export default function App() {
  return (
    <div className="relative flex h-[720px] w-[1280px] flex-col overflow-hidden bg-white font-['Noto_Sans',sans-serif]">
      <TitleBar />
      <Header />
      <div className="flex min-h-0 flex-1">
        <LeftRail />
        <Editor />
        <RightRail />
      </div>
      <BottomTabs />
      <PlcSim />
      <LoadPreview />
      <DownloadDialog />
      <svg viewBox="0 0 10 14" className="absolute top-[515px] left-[819px] h-[13px] w-[9px]"><path d="M1 1v10l2.500-2 1.500 4 2-1-1.500-3.500H9z" fill="#fff" stroke="#222" /></svg>
    </div>
  )
}
